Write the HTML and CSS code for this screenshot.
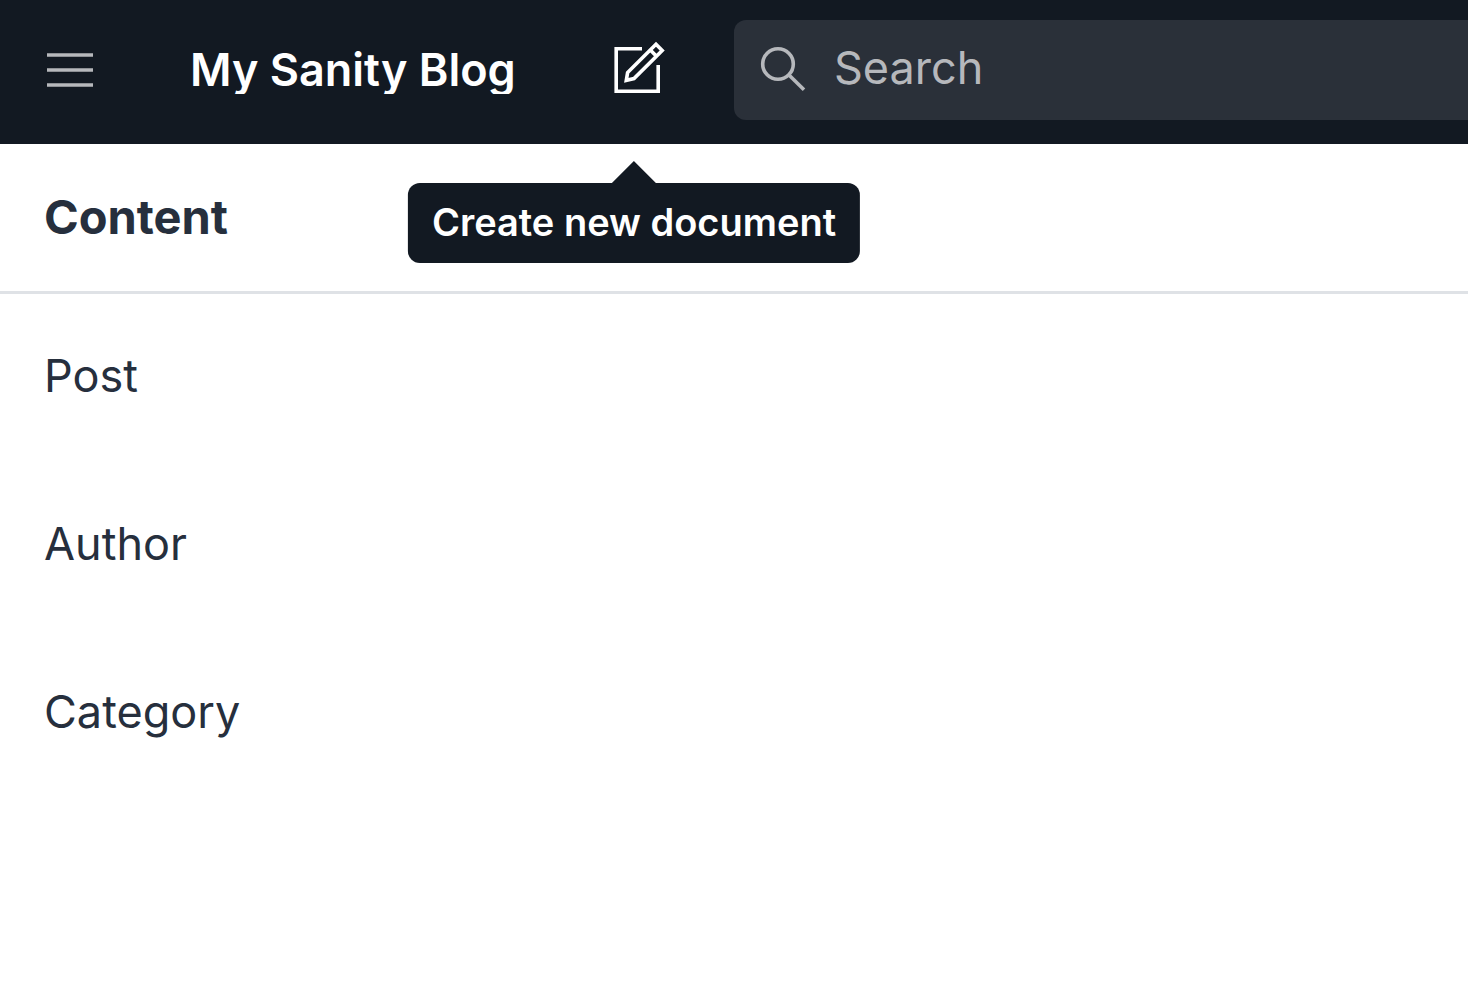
FILE: index.html
```html
<!DOCTYPE html>
<html lang="en">
<head>
  <meta charset="UTF-8" />
  <meta name="viewport" content="width=device-width, initial-scale=1.0" />
  <title>My Sanity Blog</title>
  <link rel="stylesheet" href="styles.css">
</head>
<body>
  <header class="navbar">
    <button class="icon-button menu-button" type="button" aria-label="Open menu">
      <svg width="48" height="48" viewBox="0 0 48 48">
        <path d="M1 9h46M1 24h46M1 39h46" />
      </svg>
    </button>

    <a class="brand" href="#">My Sanity Blog</a>

    <div class="create">
      <button class="icon-button" type="button" aria-label="Create" aria-describedby="createTip">
        <svg width="64" height="64" viewBox="0 0 64 64">
          <path d="M40 10.7H14.2v42.5h42V27" />
          <path d="M54 6.2l6.2 6.2L32 40.6l-7.7 1.7 1.3-7.7zM48.3 12l6.2 6.2" />
        </svg>
      </button>
      <div class="tooltip" id="createTip" role="tooltip">Create new document</div>
    </div>

    <label class="search">
      <svg width="48" height="48" viewBox="0 0 48 48">
        <circle cx="20" cy="18" r="15.3" />
        <path d="M31 29l15 14.8" />
      </svg>
      <input type="search" placeholder="Search" aria-label="Search">
    </label>
  </header>

  <main class="pane">
    <h1 class="pane-title">Content</h1>
    <ul class="pane-list">
      <li><a href="#">Post</a></li>
      <li><a href="#">Author</a></li>
      <li><a href="#">Category</a></li>
    </ul>
  </main>
</body>
</html>
```
FILE: styles.css
```css
:root {
  --navbar: #121922;
  --field: #2a3039;
  --muted: #b6b8bc;
  --text: #262f3d;
  --border: #dfe2e6;
  --light: #fff;
}

* {
  box-sizing: border-box;
  margin: 0;
  padding: 0;
}

body {
  background: var(--light);
  color: var(--text);
  font-family: Inter, sans-serif;
  font-size: 45px;
  line-height: 48px;
}

a {
  color: inherit;
  text-decoration: none;
}

svg {
  display: block;
  flex-shrink: 0;
  fill: none;
  stroke: currentColor;
  stroke-width: 3.6;
}

.navbar {
  display: grid;
  grid-template-columns: 140px 444px 100px minmax(0, 1fr);
  align-items: center;
  padding: 20px 0 24px;
  background: var(--navbar);
  color: var(--light);
}

.icon-button {
  display: flex;
  justify-content: center;
  width: 100%;
  background: none;
  border: none;
  color: inherit;
  cursor: pointer;
}

.menu-button {
  color: var(--muted);
}

.brand {
  padding-left: 50px;
  overflow: hidden;
  font-weight: 600;
  white-space: nowrap;
}

.create {
  position: relative;
}

.tooltip {
  position: absolute;
  top: 100%;
  left: 50%;
  transform: translateX(-50%);
  margin-top: 81px;
  padding: 15px 24px 17px;
  background: var(--navbar);
  border-radius: 12px;
  font-size: 38px;
  font-weight: 600;
  white-space: nowrap;
}

/* arrow pointing at the button */
.tooltip::before {
  content: "";
  position: absolute;
  bottom: 100%;
  left: 50%;
  transform: translateX(-50%);
  border: 22px solid transparent;
  border-top: none;
  border-bottom-color: var(--navbar);
}

.search {
  display: flex;
  align-items: center;
  gap: 28px;
  height: 100px;
  margin-left: 50px;
  padding-left: 24px;
  background: var(--field);
  border-radius: 12px 0 0 12px;
  color: var(--muted);
}

.search input {
  flex: 1;
  min-width: 0;
  padding-bottom: 4px;
  background: none;
  border: none;
  outline: none;
  color: inherit;
  font: inherit;
}

.search input::placeholder {
  color: inherit;
}

.pane-title {
  padding: 49px 44px 50px;
  border-bottom: 3px solid var(--border);
  font-size: 47px;
  font-weight: 700;
}

.pane-list {
  list-style: none;
}

.pane-list a {
  display: block;
  padding: 58px 44px 62px;
}
```
